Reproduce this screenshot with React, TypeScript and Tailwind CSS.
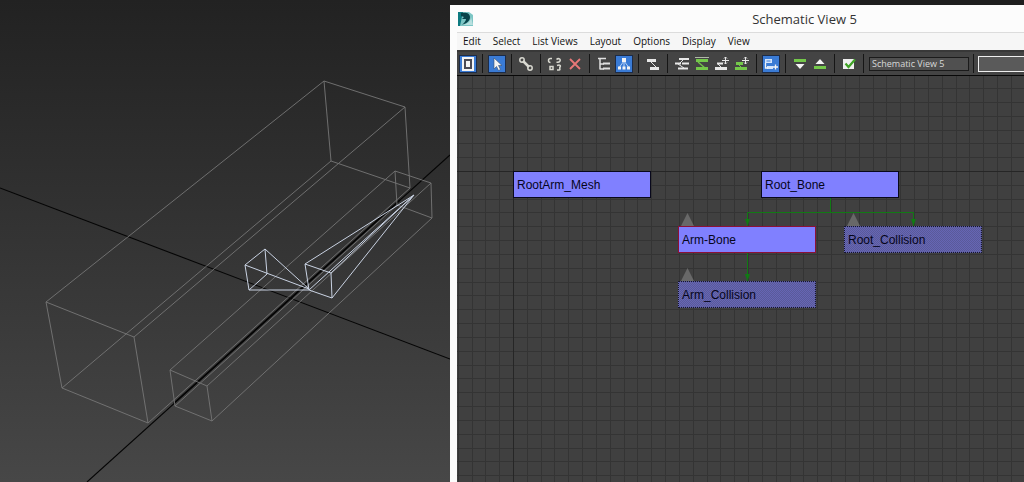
import type { ReactNode } from 'react';

const menus = ['Edit', 'Select', 'List Views', 'Layout', 'Options', 'Display', 'View'];

const nodes = [
  { name: 'RootArm_Mesh', place: 'left-[56px] top-[95px]', kind: 'normal', arrow: false },
  { name: 'Root_Bone', place: 'left-[304px] top-[95px]', kind: 'normal', arrow: false },
  { name: 'Arm-Bone', place: 'left-[221px] top-[150px]', kind: 'selected', arrow: true },
  { name: 'Root_Collision', place: 'left-[387px] top-[150px]', kind: 'hidden', arrow: true },
  { name: 'Arm_Collision', place: 'left-[221px] top-[205px]', kind: 'hidden', arrow: true },
];

const kinds: Record<string, string> = {
  normal: 'border-[#08081c] bg-[#8080ff]',
  selected: 'border-[#8c1038] bg-[#8080ff]',
  hidden:
    'border-dotted border-[#15152c] bg-[#6060a8] bg-[conic-gradient(#6666b4_25%,#5a5a9a_0_50%,#6666b4_0_75%,#5a5a9a_0)] bg-[length:2px_2px]',
};

// Grid step is a little under 14px, lines are snapped to whole pixels
const STEP = 13.83;
const gridLines = Array.from({ length: 180 }, (_, i) => i - 6);

type ToolProps = { label: string; active?: boolean; children: ReactNode };

const Tool = ({ label, active = false, children }: ToolProps) => (
  <button
    aria-label={label}
    aria-pressed={active}
    className="flex h-5 w-5 shrink-0 items-center justify-center"
  >
    <span
      className={`flex h-[18px] w-[18px] items-center justify-center ${
        active ? 'border border-[#1d2c48] bg-[#3a7bd5]' : ''
      }`}
    >
      <svg width="16" height="16" viewBox="0 0 16 16" fill="none" className="shrink-0">
        {children}
      </svg>
    </span>
  </button>
);

const Separator = () => (
  <div className="flex w-[9px] shrink-0 justify-center self-stretch py-[2px]">
    <div className="w-px bg-[#161616]" />
  </div>
);

const Viewport = () => (
  <svg width="450" height="482" viewBox="0 0 450 482" fill="none" aria-label="Perspective viewport">
    {/* World axes */}
    <g stroke="#050505">
      <path d="M0 188L450 359" strokeWidth="1.1" />
      <path d="M87 482L450 155" strokeWidth="1.1" />
      <path d="M174 403L400 200" strokeWidth="1.6" />
    </g>

    {/* Arm mesh */}
    <g stroke="#767676" strokeWidth="0.9">
      <path d="M46 302L134 337L148 423L62 388Z" />
      <path d="M324 81L405 107L410 188L331 161Z" />
      <path d="M46 302L324 81M134 337L405 107M148 423L410 188M62 388L331 161" />
      <path d="M170 370L207 386L212 421L175 406Z" />
      <path d="M395 171L431 183L432 218L397 205Z" />
      <path d="M170 370L395 171M207 386L431 183M212 421L432 218M175 406L397 205" />
    </g>

    {/* Bones */}
    <g stroke="#c9d2e2" strokeWidth="1">
      <path d="M305 264L331 273L332 298L309 290Z" />
      <path d="M305 264L414 195M331 273L414 195M332 298L414 195M309 290L414 195" />
      <path d="M245 265L265 249L267 274L249 290Z" />
      <path d="M245 265L309 289M265 249L309 289M249 290L309 290" />
    </g>
  </svg>
);

const Toolbar = () => (
  <div className="flex h-[26px] items-center overflow-hidden border-t-2 border-b border-t-[#383838] border-b-[#080808] bg-[#444444] pl-px">
    <Tool label="Display Floater" active>
      <path d="M3 2h10v12H3z" stroke="#f4f4f4" strokeWidth="2" />
      <path d="M4 3h8v10H4z" fill="#4a4a55" />
      <path d="M6 5h4v6H6z" fill="#f4f4f4" />
    </Tool>
    <Separator />
    <Tool label="Select" active>
      <path d="M5 2v11l2.500-2.500L9.500 14.500l2-1L9.500 9.500H13z" fill="#f4f4f4" stroke="#39506f" strokeWidth="0.6" />
    </Tool>
    <Separator />
    <Tool label="Connect">
      <g stroke="#d8d8d0" strokeWidth="1.5">
        <circle cx="4" cy="4" r="2.200" />
        <circle cx="12" cy="12" r="2.200" />
        <path d="M5 5l6 6" strokeWidth="2.500" />
      </g>
    </Tool>
    <Separator />
    <Tool label="Unlink Selected">
      <g stroke="#d8d8d0" strokeWidth="1.5">
        <path d="M5 2.500H3.500a1.500 1.500 0 0 0 0 4M9.500 3.500c2-2 4.500 0 3.500 1.500s-2 1.500-3.500 1" />
        <path d="M3 10.500h3v3H3zM10 9.500c3-1 4 0 3 1.500s1 3-1 3h-2" />
      </g>
    </Tool>
    <Tool label="Delete Objects">
      <path d="M3 3l10 10M13 3L3 13" stroke="#e87878" strokeWidth="1.8" />
    </Tool>
    <Separator />
    <Tool label="Hierarchy Mode">
      <path d="M2 2.500h8M4 3v10.500M4 8h4M4 13h4" stroke="#e0e0e0" strokeWidth="1.5" />
      <path d="M7 6.500h7v2H7zM7 11.500h7v2H7z" fill="#e0e0e0" />
    </Tool>
    <Tool label="References Mode" active>
      <path d="M8 5v6M8 5L3.500 11M8 5l4.500 6" stroke="#b9d3f6" />
      <path d="M6 2h4v4H6zM2 10.500h3v3H2zM6.500 10.500h3v3h-3zM11 10.500h3v3h-3z" fill="#f4f4f4" />
    </Tool>
    <Separator />
    <Tool label="Always Arrange">
      <path d="M2 3h9v3H2zM5 11h9v3H5z" fill="#e8e8e8" />
      <path d="M5 5l6 6" stroke="#e8e8e8" />
    </Tool>
    <Separator />
    <Tool label="Arrange Children">
      <path d="M5 2h10v2H5zM1 6.500h6v2H1zM8 6.500h7v2H8zM4 11.500h10v2H4z" fill="#e8e8e8" />
      <path d="M10 3L5 8M4 8l6 4" stroke="#e8e8e8" />
    </Tool>
    <Tool label="Arrange Selected">
      <path d="M1 1h14v1H1z" fill="#b0b8a8" />
      <path d="M2 3h12v3H2zM2 11h12v3H2z" fill="#74c84a" />
      <path d="M4 6l7 6" stroke="#74c84a" strokeWidth="1.3" />
    </Tool>
    <Tool label="Free All">
      <path d="M3 6.500h6v2H3zM1 11h12v3H1z" fill="#e8e8e8" />
      <path d="M11.500 1v7M8 4.500h7M10 2.500L11.500 1l1.500 1.500M10 6.500L11.500 8l1.500-1.500" stroke="#e8e8e8" />
      <path d="M4 8l4 4" stroke="#e8e8e8" />
    </Tool>
    <Tool label="Free Selected">
      <path d="M2 6h7v3H2zM1 11h12v3H1z" fill="#74c84a" />
      <path d="M4 8l4 4" stroke="#74c84a" />
      <path d="M11.500 1v7M8 4.500h7M10 2.500L11.500 1l1.500 1.500M10 6.500L11.500 8l1.500-1.500" stroke="#e8e8e8" />
    </Tool>
    <Separator />
    <Tool label="Move Children" active>
      <path d="M2 3h7v4H2zM4 10h6v3H4z" fill="#d5e5fb" />
      <path d="M3.500 5h4" stroke="#3a7bd5" />
      <path d="M2.500 7v5H5M12.500 8.500v5M10 11h5" stroke="#f4f4f4" strokeWidth="1.300" />
    </Tool>
    <Separator />
    <Tool label="Expand Selected">
      <path d="M2 3h12v3H2z" fill="#74c84a" />
      <path d="M3.500 8h9L8 13z" fill="#f4f4f4" />
    </Tool>
    <Tool label="Collapse Selected">
      <path d="M2 10h12v3H2z" fill="#74c84a" />
      <path d="M3.500 8h9L8 3z" fill="#f4f4f4" />
    </Tool>
    <Separator />
    <Tool label="Preferences">
      <path d="M2 3h11v10H2z" fill="#f0f0f0" />
      <path d="M4.500 7.500L7.500 11L14 3.500" stroke="#3fa326" strokeWidth="2.200" />
    </Tool>
    <Separator />
    <input
      aria-label="View name"
      defaultValue="Schematic View 5"
      className="ml-px h-[14px] w-[100px] shrink-0 border border-[#1b1b1b] bg-[#505050] px-[2px] font-['Open_Sans',sans-serif] text-[9px] leading-[12px] text-[#d8d8d8]"
    />
    <Separator />
    <input
      aria-label="Bookmark name"
      className="h-[16px] min-w-0 flex-1 border border-r-0 border-[#f0f0f0] bg-[#5a5a5a]"
    />
  </div>
);

const Grid = () => (
  <svg className="absolute inset-0 h-full w-full" aria-hidden="true">
    {gridLines.map((n) => (
      <g key={n} fill="#343434">
        <rect x={Math.round(56 + n * STEP)} y="0" width="1" height="100%" />
        <rect x="0" y={Math.round(95 + n * STEP)} width="100%" height="1" />
      </g>
    ))}
    {/* Origin axes */}
    <path d="M56 0h1v2000h-1zM0 95h3000v1H0z" fill="#262626" />
  </svg>
);

const Schematic = () => (
  <div className="relative min-h-[406px] flex-1 overflow-hidden bg-[#404040]">
    <Grid />

    {/* Hierarchy links */}
    <svg className="absolute left-0 top-0" width="567" height="300" viewBox="0 0 567 300" fill="none">
      <path d="M373.500 122v14M290.500 150v-13.500h166V150M290.500 177v28" stroke="#117a14" />
      <path d="M288 143h5l-2.500 7zM454 143h5l-2.500 7zM288 198h5l-2.500 7z" fill="#117a14" />
    </svg>

    {nodes.map((node) => (
      <div key={node.name} className={`absolute ${node.place}`}>
        {node.arrow && (
          <svg className="absolute bottom-full left-[3px]" width="13" height="13" viewBox="0 0 13 13">
            <path d="M6.500 0L13 13H0z" fill="#686868" />
          </svg>
        )}
        <div
          className={`flex h-[27px] w-[138px] items-center border px-[3px] font-['Liberation_Sans',Arial,sans-serif] text-[12px] leading-4 text-[#05051a] ${kinds[node.kind]}`}
        >
          {node.name}
        </div>
      </div>
    ))}
  </div>
);

const App = () => {
  return (
    <div className="flex min-h-screen overflow-hidden bg-linear-to-b from-[#222222] to-[#474747]">
      <div className="w-[450px] shrink-0 overflow-hidden">
        <Viewport />
      </div>

      <div className="flex min-w-0 flex-1 flex-col border-t-[5px] border-[#1e1e1e]">
        <div className="flex flex-1 flex-col bg-[#fcfcfc] pl-[7px] font-['Open_Sans',sans-serif]">
          <header className="relative flex h-[27px] items-center justify-center">
            <svg className="absolute left-0 top-[6px]" width="17" height="16" viewBox="0 0 17 16">
              <path d="M1 1h11l4 3v11H1z" fill="#7cc5c4" />
              <path d="M1 1h5L3 15H1z" fill="#0d7a80" />
              <path d="M4 2c5-1 9 0 9 4s-3 6-8 8c2-2 4-4 4-6H5l2-2-3-1z" fill="#07434a" />
              <path d="M5 14c6-1 9-4 9-8l2 8z" fill="#b9e0df" />
            </svg>
            <h1 className="pl-[128px] text-[13px] leading-5 whitespace-nowrap text-[#333333]">
              Schematic View 5
            </h1>
          </header>

          <nav className="flex h-[18px] items-center border-t border-[#dcdcdc] bg-[#f6f6f6] pb-[2px]">
            {menus.map((menu) => (
              <button key={menu} className="px-[6px] text-[10px] leading-4 whitespace-nowrap text-[#111111]">
                {menu}
              </button>
            ))}
          </nav>

          <Toolbar />
          <Schematic />
        </div>
      </div>
    </div>
  );
};

export default App;
